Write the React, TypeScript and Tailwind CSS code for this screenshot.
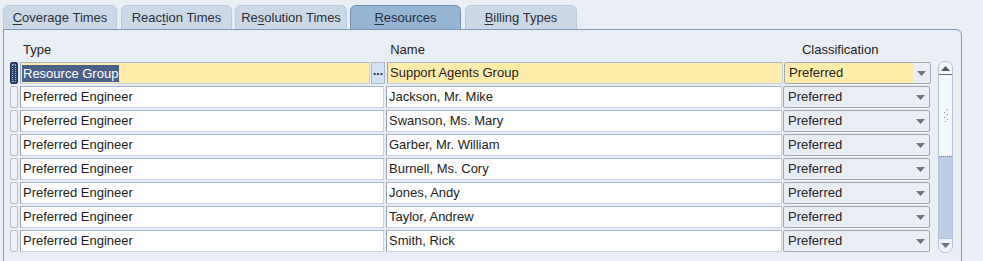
import React from 'react';

const rows = [
  ['Resource Group', 'Support Agents Group'],
  ['Preferred Engineer', 'Jackson, Mr. Mike'],
  ['Preferred Engineer', 'Swanson, Ms. Mary'],
  ['Preferred Engineer', 'Garber, Mr. William'],
  ['Preferred Engineer', 'Burnell, Ms. Cory'],
  ['Preferred Engineer', 'Jones, Andy'],
  ['Preferred Engineer', 'Taylor, Andrew'],
  ['Preferred Engineer', 'Smith, Rick'],
];

function Tab({ pre, key1, post, width, active, ml }: { pre: string; key1: string; post: string; width: string; active?: boolean; ml: string }) {
  return (
    <div
      className={
        'flex h-[24px] items-center justify-center rounded-t-[6px] border border-b-0 ' +
        width +
        ' ' +
        ml +
        ' ' +
        (active ? 'border-[#6d8fb4] bg-[#94b5d6]' : 'border-[#bccbdc] bg-[#cbd8e8]')
      }
    >
      <span className="text-[#2a2f36]">
        {pre}
        <span className="underline underline-offset-2">{key1}</span>
        {post}
      </span>
    </div>
  );
}

function Arrow({ up }: { up?: boolean }) {
  return (
    <svg width="9" height="5" viewBox="0 0 9 5" className="block">
      {up ? <path d="M0 5 L4.5 0 L9 5 Z" fill="#4e5a6b" /> : <path d="M0 0 L9 0 L4.5 5 Z" fill="#6b7482" />}
    </svg>
  );
}

export default function App() {
  return (
    <div className="h-[261px] w-[983px] overflow-hidden bg-[#e9edf4] pl-[3px] pt-[5px] font-['Liberation_Sans',Arial,sans-serif] text-[13px] leading-[16px] text-[#222]">
      {/* Tabs */}
      <div className="flex">
        <Tab pre="" key1="C" post="overage Times" width="w-[114px]" ml="ml-0" />
        <Tab pre="Reac" key1="t" post="ion Times" width="w-[111px]" ml="ml-[4px]" />
        <Tab pre="Re" key1="s" post="olution Times" width="w-[112px]" ml="ml-[3px]" />
        <Tab pre="" key1="R" post="esources" width="w-[111px]" ml="ml-[3px]" active />
        <Tab pre="" key1="B" post="illing Types" width="w-[112px]" ml="ml-[4px]" />
      </div>

      {/* Panel */}
      <div className="h-[240px] w-[959px] rounded-tr-[6px] border border-[#7f9ab8] pl-[6px] pt-[12px]">
        <div className="flex h-[16px]">
          <span className="ml-[13px]">Type</span>
          <span className="ml-[339px]">Name</span>
          <span className="ml-[377px]">Classification</span>
        </div>

        <div className="mt-[3px] flex">
          <div className="mt-[1px] flex flex-col gap-[2px]">
            {rows.map(([type, name], i) => {
              const cur = i === 0;
              return (
                <div key={i} className="flex h-[22px]">
                  {cur ? (
                    <div className="h-[22px] w-[8px] rounded-[2px] border border-[#1f3358] bg-[#2c4674] p-[1px]">
                      <div className="h-full w-full border border-dotted border-[#9fb3d3]" />
                    </div>
                  ) : (
                    <div className="h-[22px] w-[8px] rounded-[2px] border border-[#b3c0d2] bg-[#edf1f7]" />
                  )}
                  {cur ? (
                    <>
                      <div className="ml-[2px] flex h-[22px] w-[350px] items-center border border-[#c9d2de] border-l-[#9aa6b8] border-t-[#aab6c8] bg-[#ffeca8] pl-[1px]">
                        <span className="bg-[#4b6089] px-[1px] leading-[17px] text-white">{type}</span>
                      </div>
                      <div className="ml-[1px] flex h-[22px] w-[14px] items-center justify-center border border-[#a9b8cb] bg-[#d2e2f3] pb-[5px] text-[12px] font-bold leading-[8px] text-[#1d2330]">
                        ...
                      </div>
                    </>
                  ) : (
                    <div className="ml-[2px] flex h-[22px] w-[364px] items-center border border-[#c6d2e2] border-l-[#96a3b6] border-t-[#a7b4c7] bg-white pl-[2px]">
                      {type}
                    </div>
                  )}
                  <div
                    className={
                      'ml-[2px] flex h-[22px] w-[396px] items-center border border-[#c6d2e2] border-l-[#96a3b6] border-t-[#a7b4c7] pl-[2px] ' +
                      (cur ? 'bg-[#ffeca8]' : 'bg-white')
                    }
                  >
                    {name}
                  </div>
                  <div className="ml-[1px] flex h-[22px] w-[147px] items-stretch overflow-hidden rounded-[2px] border border-[#a3a8b0] bg-[#e9edf4]">
                    <div className={'flex flex-1 items-center pl-[4px] ' + (cur ? 'bg-[#ffeca8]' : '')}>Preferred</div>
                    <div className="flex w-[16px] items-center justify-center pr-[2px]">
                      <Arrow />
                    </div>
                  </div>
                </div>
              );
            })}
          </div>

          {/* Scrollbar */}
          <div className="ml-[7px] flex h-[192px] w-[15px] flex-col overflow-hidden rounded-[7px] border border-[#aec3dc] bg-[#f4f7fb]">
            <div className="flex h-[13px] items-center justify-center border-b border-[#56667c] pt-[1px]">
              <Arrow up />
            </div>
            <div className="flex h-[81px] items-center justify-center bg-[#f4f7fb]">
              <svg width="8" height="14" viewBox="0 0 8 14" className="block">
                <rect x="5" y="0" width="1" height="1" fill="#7d8ea6" />
                <rect x="4" y="1" width="1" height="1" fill="#c3cfdf" />
                <rect x="2" y="3" width="1" height="1" fill="#7d8ea6" />
                <rect x="5" y="5" width="1" height="1" fill="#7d8ea6" />
                <rect x="4" y="6" width="1" height="1" fill="#c3cfdf" />
                <rect x="2" y="8" width="1" height="1" fill="#7d8ea6" />
                <rect x="5" y="10" width="1" height="1" fill="#7d8ea6" />
                <rect x="3" y="12" width="1" height="1" fill="#7d8ea6" />
              </svg>
            </div>
            <div className="flex-1 border-t border-dotted border-[#6f7f96] bg-[#bccde5]" />
            <div className="flex h-[14px] items-center justify-center rounded-b-[7px] border-t border-[#aec3dc] bg-[#eef2f8]">
              <Arrow />
            </div>
          </div>
        </div>
      </div>
    </div>
  );
}
